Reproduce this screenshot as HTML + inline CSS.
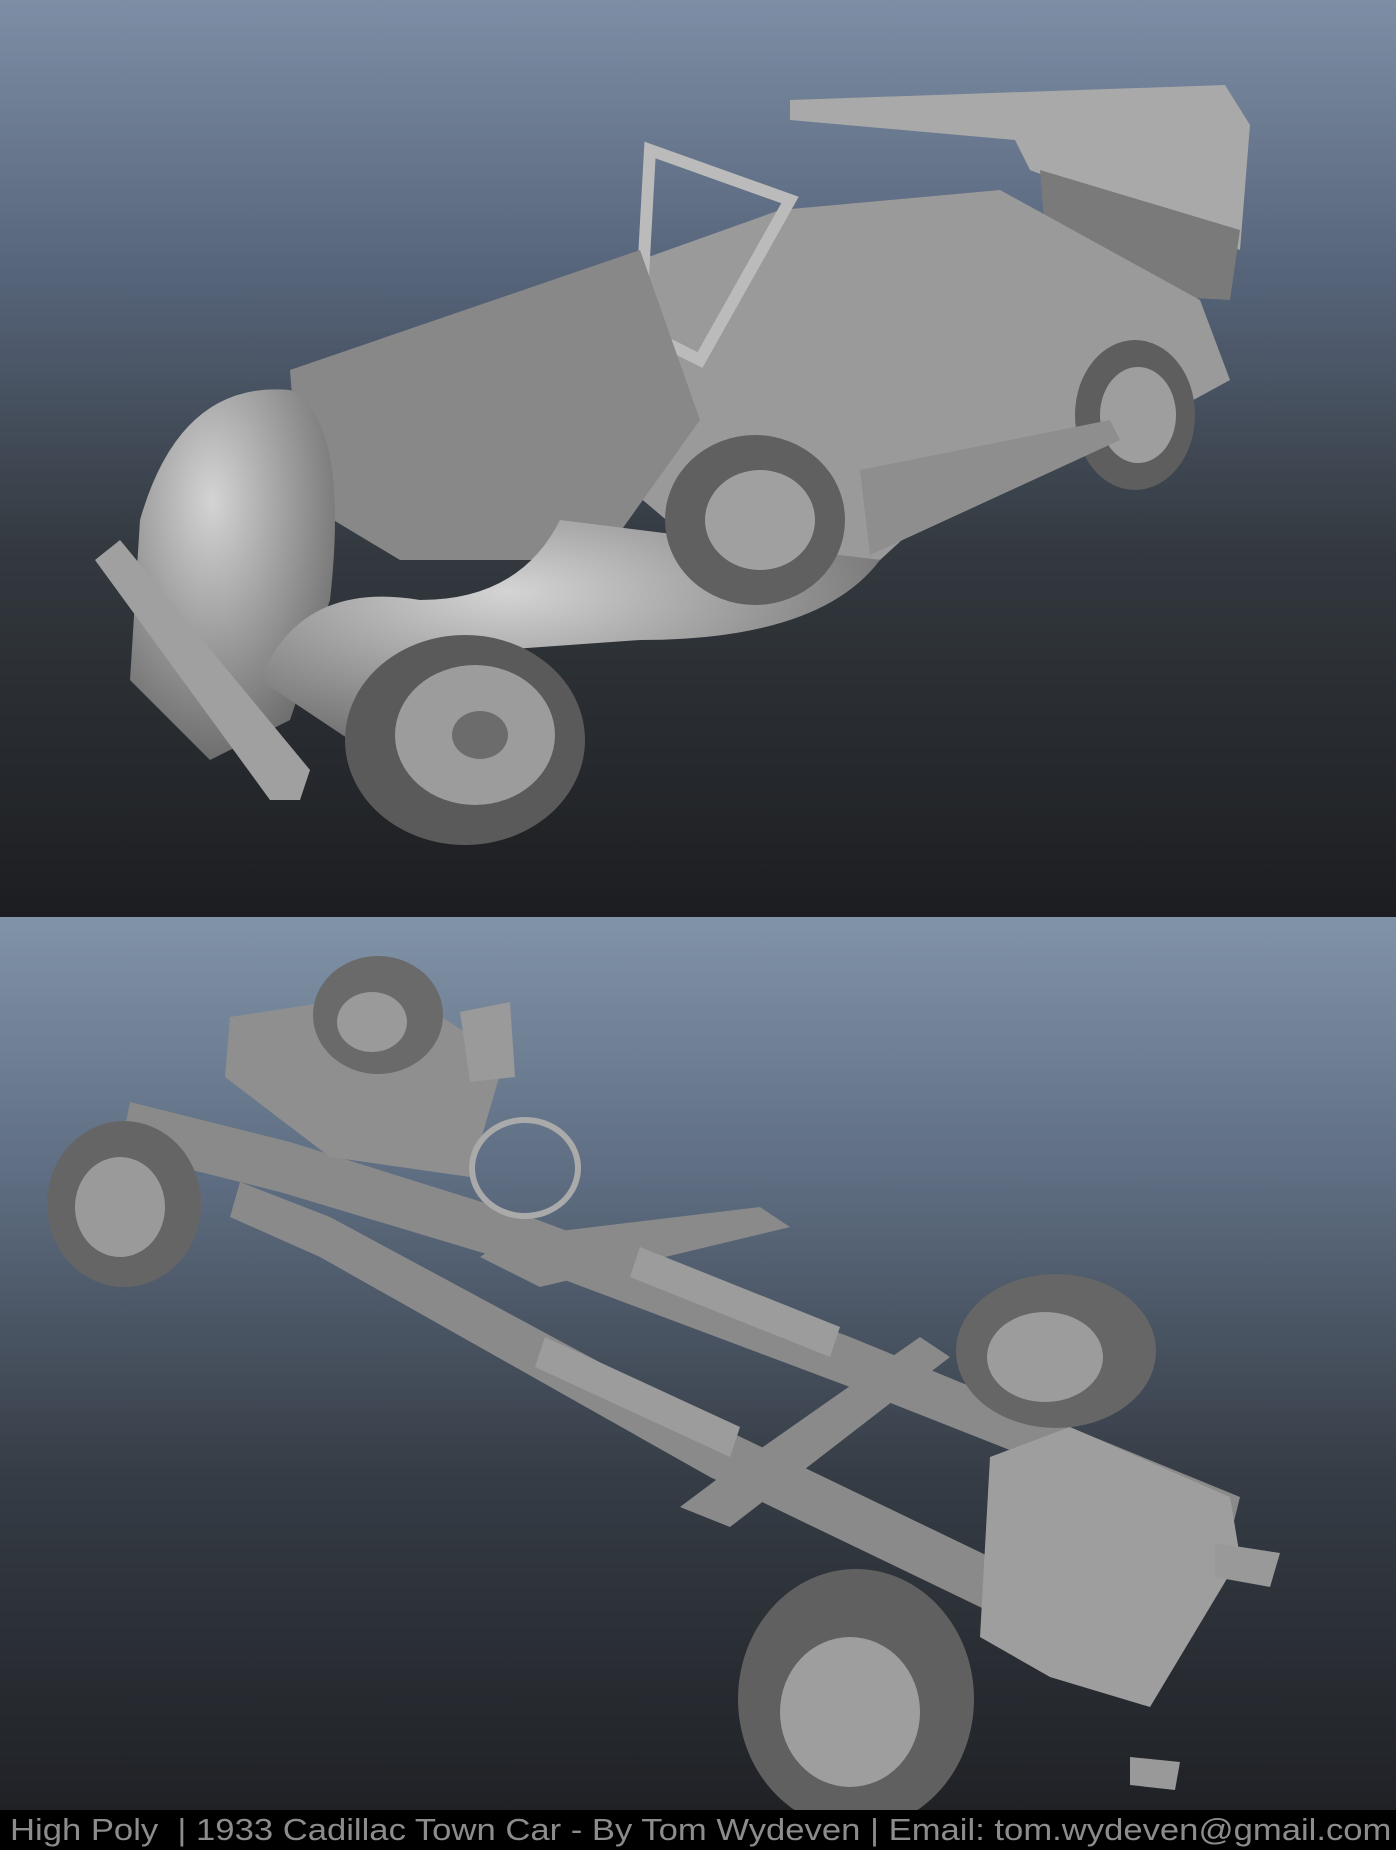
<!DOCTYPE html>
<html><head><meta charset="utf-8"><style>
html,body{margin:0;padding:0;width:1396px;height:1850px;overflow:hidden;background:#000}
.p1{position:absolute;left:0;top:0;width:1396px;height:917px;background:linear-gradient(#7d8ea5 0%,#56647a 30%,#33393f 60%,#1c1d20 100%)}
.p2{position:absolute;left:0;top:917px;width:1396px;height:893px;background:linear-gradient(#8193a8 0%,#5d6c80 30%,#363d46 62%,#1f2125 100%)}
.f{position:absolute;left:0;top:1810px;width:1396px;height:40px;background:#000;overflow:hidden}
.f span{position:absolute;left:10px;top:0;color:#8c8c8c;font:31px "Liberation Sans",sans-serif;line-height:40px;white-space:nowrap;transform:scaleX(1.117);transform-origin:0 0}
svg{position:absolute;left:0;top:0}
</style></head><body>
<div class="p1"><svg width="1396" height="917">
<defs><radialGradient id="g" cx="40%" cy="30%" r="70%"><stop offset="0" stop-color="#d4d4d4"/><stop offset="1" stop-color="#6e6e6e"/></radialGradient></defs>
<polygon points="790,100 1225,85 1250,125 1240,250 1030,170 1015,140 790,120" fill="#a9a9a9"/>
<polygon points="1040,170 1240,230 1230,300 1050,290" fill="#7a7a7a"/>
<polygon points="640,260 780,210 1000,190 1200,300 1230,380 1120,440 1000,450 880,560 690,540 560,430" fill="#9a9a9a"/>
<polygon points="650,150 790,200 700,360 640,330" fill="none" stroke="#bbb" stroke-width="12"/>
<polygon points="290,370 640,250 700,420 600,560 400,560 300,500" fill="#888"/>
<path d="M140,520 Q180,380 290,390 Q350,420 330,600 L290,720 L210,760 L130,680 Z" fill="url(#g)"/>
<path d="M260,680 Q300,580 420,600 Q520,600 560,520 L880,560 Q820,640 640,640 L500,650 L380,760 Z" fill="url(#g)"/>
<polygon points="95,560 120,540 310,770 300,800 270,800" fill="#a0a0a0"/>
<ellipse cx="465" cy="740" rx="120" ry="105" fill="#5a5a5a"/><ellipse cx="475" cy="735" rx="80" ry="70" fill="#9c9c9c"/><ellipse cx="480" cy="735" rx="28" ry="24" fill="#6c6c6c"/>
<ellipse cx="755" cy="520" rx="90" ry="85" fill="#606060"/><ellipse cx="760" cy="520" rx="55" ry="50" fill="#a0a0a0"/>
<ellipse cx="1135" cy="415" rx="60" ry="75" fill="#5e5e5e"/><ellipse cx="1138" cy="415" rx="38" ry="48" fill="#9e9e9e"/>
<polygon points="860,470 1110,420 1120,440 870,555" fill="#8e8e8e"/>
</svg></div>
<div class="p2"><svg width="1396" height="893">
<polygon points="130,185 290,225 530,300 850,420 1240,580 1230,620 850,470 530,350 280,275 120,235" fill="#8a8a8a"/>
<polygon points="240,265 330,300 720,510 990,640 1160,740 1150,770 980,690 710,560 320,340 230,300" fill="#8a8a8a"/>
<polygon points="480,340 510,320 760,290 790,310 540,370" fill="#8a8a8a"/>
<polygon points="680,590 720,560 920,420 950,440 730,610" fill="#8a8a8a"/>
<polygon points="640,330 840,410 830,440 630,360" fill="#9c9c9c"/>
<polygon points="545,420 740,510 730,540 535,450" fill="#9c9c9c"/>
<polygon points="230,100 400,74 505,140 470,260 330,240 225,160" fill="#8f8f8f"/>
<polygon points="460,95 510,85 515,160 470,165" fill="#9a9a9a"/>
<ellipse cx="525" cy="251" rx="53" ry="48" fill="none" stroke="#aaa" stroke-width="6"/>
<polygon points="990,540 1070,510 1230,580 1240,640 1150,790 1050,760 980,720" fill="#9e9e9e"/>
<ellipse cx="124" cy="287" rx="77" ry="83" fill="#656565"/><ellipse cx="120" cy="290" rx="45" ry="50" fill="#9a9a9a"/>
<ellipse cx="378" cy="98" rx="65" ry="59" fill="#6a6a6a"/><ellipse cx="372" cy="105" rx="35" ry="30" fill="#9a9a9a"/>
<ellipse cx="1056" cy="434" rx="100" ry="77" fill="#666"/><ellipse cx="1045" cy="440" rx="58" ry="45" fill="#9c9c9c"/>
<ellipse cx="856" cy="782" rx="118" ry="130" fill="#606060"/><ellipse cx="850" cy="795" rx="70" ry="75" fill="#9e9e9e"/>
<polygon points="1215,626 1280,636 1270,670 1215,660" fill="#999"/>
<polygon points="1130,840 1180,845 1175,873 1130,868" fill="#999"/>
</svg></div>
<div class="f"><span>High Poly&nbsp; | 1933 Cadillac Town Car - By Tom Wydeven | Email: tom.wydeven@gmail.com</span></div>
</body></html>
